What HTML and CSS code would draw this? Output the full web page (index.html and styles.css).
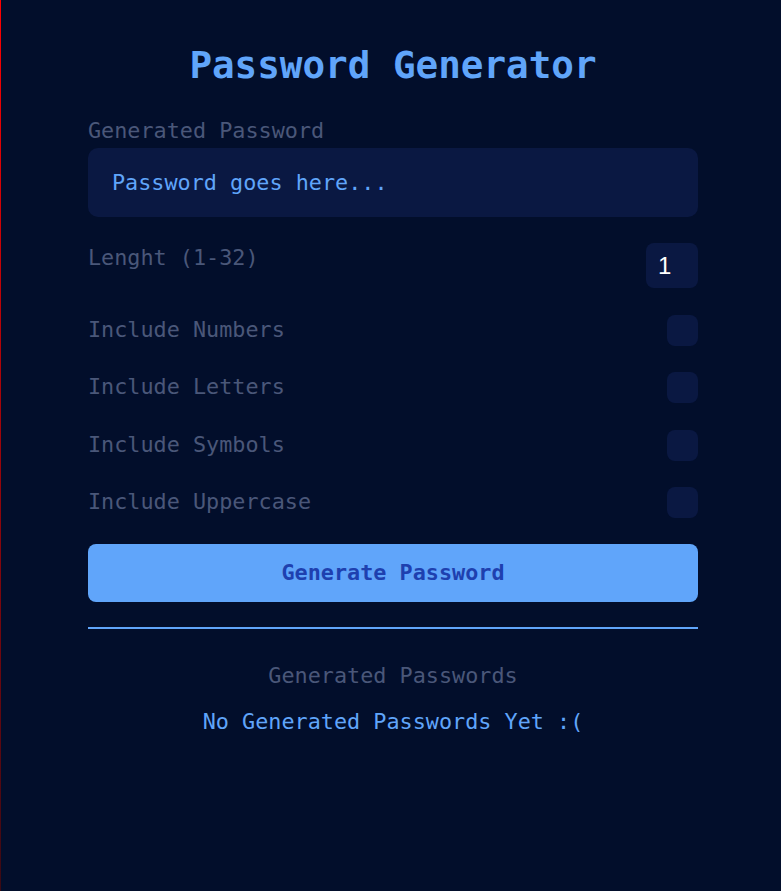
FILE: index.html
```html
<!DOCTYPE html>
<html lang="en">
<head>
    <meta charset="UTF-8">
    <meta name="viewport" content="width=device-width, initial-scale=1">
    <title>Password Generator</title>
    <link rel="stylesheet" href="styles.css">
</head>
<body>
<div class="app">
    <h1 class="title">Password Generator</h1>
    <label class="field-label">Generated Password</label>
    <div class="output">Password goes here...</div>

    <div class="options">
        <div class="option">
            <span class="option-label">Lenght (1-32)</span>
            <input class="length-input" type="number" value="1" min="1" max="32">
        </div>
        <div class="option">
            <span class="option-label">Include Numbers</span>
            <input class="check" type="checkbox">
        </div>
        <div class="option">
            <span class="option-label">Include Letters</span>
            <input class="check" type="checkbox">
        </div>
        <div class="option">
            <span class="option-label">Include Symbols</span>
            <input class="check" type="checkbox">
        </div>
        <div class="option">
            <span class="option-label">Include Uppercase</span>
            <input class="check" type="checkbox">
        </div>
    </div>

    <button class="generate">Generate Password</button>
    <hr class="divider">

    <h2 class="history-title">Generated Passwords</h2>
    <p class="history-empty">No Generated Passwords Yet :(</p>
</div>
</body>
</html>
```

FILE: styles.css
```css
* {
    box-sizing: border-box;
}

html {
    background: #020e2b;
}

body {
    margin: 0;
    min-height: 100vh;
    padding-left: 4px;
    background: #020e2b;
    border-left: 1px solid #e00;
    border-image: linear-gradient(#ff0000, #3a0a14) 1;
    font-family: "DejaVu Sans Mono", "Liberation Mono", monospace;
    font-size: 21.8px;
    line-height: 28px;
    color: #4a5779;
}

.app {
    width: 610px;
    margin: 0 auto;
    padding-top: 42px;
}

.title {
    margin: 0 0 29px;
    font-size: 37.6px;
    line-height: 46px;
    font-weight: bold;
    text-align: center;
    color: #60a5fa;
}

.field-label {
    display: block;
    margin-bottom: 3px;
}

.output {
    padding: 20px 24px;
    line-height: 29px;
    border-radius: 10px;
    background: #0a1842;
    color: #60a5fa;
}

.options {
    display: flex;
    flex-direction: column;
    gap: 26.5px;
    margin-top: 26px;
}

.option {
    display: flex;
    justify-content: space-between;
    align-items: flex-start;
}

.option-label {
    padding-top: 1px;
}

.length-input {
    width: 52px;
    height: 45px;
    margin: 0;
    padding: 0 12px;
    border: none;
    border-radius: 8px;
    background: #0a1842;
    color: #fff;
    font-family: "Liberation Sans", Arial, sans-serif;
    font-size: 24px;
    outline: none;
    appearance: textfield;
    -moz-appearance: textfield;
}

.length-input::-webkit-inner-spin-button,
.length-input::-webkit-outer-spin-button {
    -webkit-appearance: none;
    margin: 0;
}

.check {
    appearance: none;
    -webkit-appearance: none;
    width: 31px;
    height: 31px;
    margin: 0;
    border-radius: 8px;
    background: #0a1842;
}

.generate {
    display: block;
    width: 100%;
    margin-top: 26px;
    padding: 15px;
    border: none;
    border-radius: 8px;
    background: #60a5fa;
    color: #1e40af;
    font-family: inherit;
    font-size: 21.8px;
    font-weight: 600;
    line-height: 28px;
}

.divider {
    margin: 25px 0 0;
    height: 2px;
    border: none;
    background: #60a5fa;
}

.history-title {
    margin: 33px 0 0;
    font-size: 21.8px;
    font-weight: normal;
    line-height: 28px;
    text-align: center;
}

.history-empty {
    margin: 18px 0 0;
    text-align: center;
    color: #60a5fa;
}
```
